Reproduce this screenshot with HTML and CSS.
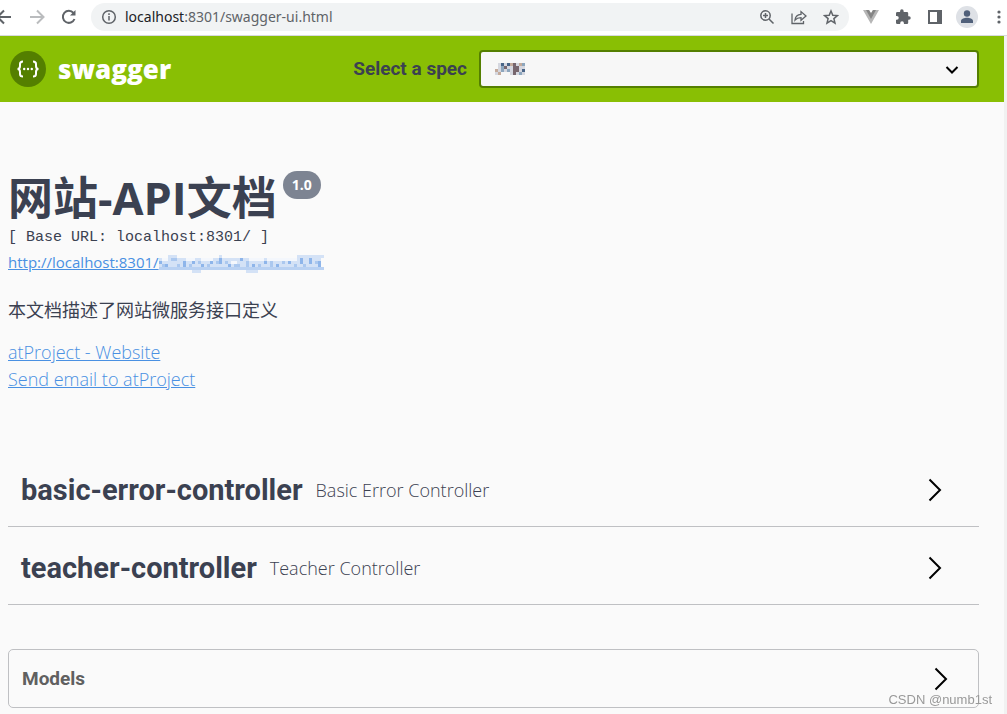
FILE: index.html
```
<!DOCTYPE html>
<html lang="zh-CN">
<head>
<meta charset="utf-8">
<title>Swagger UI</title>
<link rel="stylesheet" href="styles.css">
</head>
<body>
<header class="browser">
  <button class="tool nav-back" aria-label="Back"><svg width="18" height="18" viewBox="0 0 18 18" fill="none" stroke="#5f6368" stroke-width="2"><path d="M16 9H3M9 2.500 2.500 9 9 15.500"/></svg></button>
  <button class="tool nav-forward" aria-label="Forward"><svg width="18" height="18" viewBox="0 0 18 18" fill="none" stroke="#babcbe" stroke-width="2"><path d="M2 9h13M9 2.500 15.500 9 9 15.500"/></svg></button>
  <button class="tool nav-reload" aria-label="Reload"><svg width="18" height="18" viewBox="0 0 18 18" fill="none" stroke="#5f6368" stroke-width="2"><path d="M14.500 11A6 6 0 1 1 13.500 5"/><path d="M15.500 2v5.500H10z" fill="#5f6368" stroke="none"/></svg></button>
  <div class="omnibox">
    <svg width="16" height="16" viewBox="0 0 16 16" fill="none" stroke="#5f6368" stroke-width="1.500"><circle cx="8" cy="8" r="6.300"/><path d="M8 7v4.500M8 4.300v1.600"/></svg>
    <span class="address"><span class="host">localhost</span>:8301/swagger-ui.html</span>
    <button class="tool" aria-label="Zoom"><svg width="16" height="16" viewBox="0 0 16 16" fill="none" stroke="#5f6368" stroke-width="1.500"><circle cx="6.500" cy="6.500" r="4.700"/><path d="m10 10 4.500 4.500M4 6.500h5M6.500 4v5"/></svg></button>
    <button class="tool" aria-label="Share"><svg width="16" height="16" viewBox="0 0 16 16" fill="none" stroke="#5f6368" stroke-width="1.300"><path d="M1 4.500v10h11.500V12M4 11c.3-3.600 2.500-5.500 6-5.700V2.600L15 7l-5 4.300V8.600C7.500 8.600 5.500 9.300 4 11z"/></svg></button>
    <button class="tool" aria-label="Bookmark"><svg width="16" height="16" viewBox="0 0 16 16" fill="none" stroke="#5f6368" stroke-width="1.500"><path d="m8 2 1.800 4.200 4.600.4-3.500 3 1.100 4.500L8 11.700l-4 2.400 1.100-4.500-3.500-3 4.600-.4z"/></svg></button>
  </div>
  <button class="tool" aria-label="Vue devtools"><svg width="16" height="16" viewBox="0 0 16 16"><path d="M0 1h6l2 3 2-3h6L8 15z" fill="#b6b6b6"/><path d="M3 1h3l2 3.500L10 1h3L8 10z" fill="#858585"/></svg></button>
  <button class="tool" aria-label="Extensions"><svg width="16" height="16" viewBox="0 0 24 24" fill="#5f6368"><path d="M21 11h-1.200V6.500a2 2 0 0 0-2-2H13V3.200a2.700 2.700 0 0 0-5.400 0v1.300H3.500a2 2 0 0 0-2 2v4h1.300a2.800 2.800 0 0 1 0 5.600H1.500v4.400a2 2 0 0 0 2 2h4.300v-1.300a2.800 2.800 0 0 1 5.600 0v1.300h4.400a2 2 0 0 0 2-2v-4.300H21a2.600 2.600 0 0 0 0-5.200z"/></svg></button>
  <button class="tool" aria-label="Side panel"><svg width="16" height="16" viewBox="0 0 16 16"><path d="M1 1h14v14H1z" fill="#5f6368"/><path d="M3 3h7v10H3z" fill="#fff"/></svg></button>
  <button class="tool avatar" aria-label="Profile"><svg width="22" height="22" viewBox="0 0 22 22" fill="#50607a"><circle cx="11" cy="7.500" r="3.200"/><path d="M5 17v-2c0-2.200 3.500-3.200 6-3.200s6 1 6 3.200v2z"/></svg></button>
  <button class="tool menu" aria-label="Menu"><svg width="6" height="16" viewBox="0 0 6 16" fill="#5f6368"><circle cx="3" cy="3" r="1.600"/><circle cx="3" cy="8" r="1.600"/><circle cx="3" cy="13" r="1.600"/></svg></button>
</header>
<div class="page">
  <div class="topbar">
    <a class="brand" href="#">
      <svg width="36" height="36" viewBox="0 0 36 36"><circle cx="18" cy="18" r="18" fill="#547f00"/><g fill="none" stroke="#fff" stroke-width="2"><path d="M13 10.500c-2.500 0-3 .8-3 2.600V15c0 2-.7 3-2.500 3 1.800 0 2.500 1 2.500 3v2c0 1.800.5 2.600 3 2.600M23 10.500c2.500 0 3 .8 3 2.600V15c0 2 .7 3 2.500 3-1.800 0-2.500 1-2.500 3v2c0 1.800-.5 2.600-3 2.600"/></g><g fill="#fff"><circle cx="14.200" cy="18" r="1.200"/><circle cx="18" cy="18" r="1.200"/><circle cx="21.800" cy="18" r="1.200"/></g></svg>
      <span>swagger</span>
    </a>
    <label class="spec-label" for="spec">Select a spec</label>
    <div class="spec">
      <select id="spec"><option></option></select>
      <svg class="spec-value" width="36" height="18" viewBox="0 0 12 6" shape-rendering="crispEdges"><path d="M2 1h9v3H2zM1 3h2v2H1zM6 4h5v1H6z" fill="#d5d7df"/><path d="M3 1h1v1H3zM10 3h1v1h-1zM5 1h1v1H5z" fill="#496587"/><path d="M4 2h1v1H4zM7 1h1v4H7zM8 2h1v2H8z" fill="#77666d"/><path d="M1 3h1v1H1zM6 1h1v1H6zM9 1h1v1H9zM2 4h1v1H2z" fill="#c4ab9c"/><path d="M3 2h1v2H3zM5 3h1v1H5zM10 1h1v1h-1zM9 4h1v1H9z" fill="#8da6bd"/></svg>
      <svg class="spec-arrow" width="14" height="10" viewBox="0 0 14 10" fill="none" stroke="#000" stroke-width="2"><path d="m1.500 2 5.500 5.500L12.500 2"/></svg>
    </div>
  </div>
  <main class="content">
    <section class="info">
      <h1 class="title">网站-API文档<span class="version">1.0</span></h1>
      <div class="base-url">[ Base URL: localhost:8301/ ]</div>
      <a class="docs-link" href="#"><span>http://localhost:8301/</span><svg width="168" height="21" viewBox="0 0 56 7" shape-rendering="crispEdges" aria-hidden="true"><path d="M0 2h54v3H0zM11 6h3v1h-3zM29 6h4v1h-4zM3 1h3v1H3zM46 1h9v1h-9zM20 1h1v1h-1z" fill="#d4e2f6"/><path d="M0 5h55v1H0z" fill="#b9d1f2"/><path d="M0 3h1v1H0zM2 4h1v1H2zM8 3h1v2H8zM11 3h1v1h-1zM14 4h1v1h-1zM17 3h1v1h-1zM20 2h1v2h-1zM23 4h1v1h-1zM27 2h1v1h-1zM31 4h1v1h-1zM35 3h1v1h-1zM39 4h1v1h-1zM43 3h1v1h-1zM47 2h1v2h-1zM50 2h1v2h-1zM53 3h1v2h-1z" fill="#8eb5ea"/><path d="M1 4h1v1H1zM4 2h2v1H4zM6 4h1v1H6zM10 4h1v1h-1zM13 3h1v1h-1zM16 4h1v1h-1zM19 3h1v1h-1zM22 3h1v1h-1zM25 4h2v1h-2zM29 3h1v2h-1zM33 4h1v1h-1zM37 3h1v2h-1zM41 3h1v1h-1zM45 4h1v1h-1zM48 4h1v1h-1zM52 3h1v1h-1z" fill="#abc8ef"/><path d="M1 2h2v1H1zM9 2h3v1H9zM14 2h4v1h-4zM24 3h2v1h-2zM30 2h5v1h-5zM36 2h10v1H36z" fill="#f4f7fc"/></svg></a>
      <p class="description">本文档描述了网站微服务接口定义</p>
      <div class="contact"><a href="#">atProject - Website</a><a href="#">Send email to atProject</a></div>
    </section>
    <section class="tags">
      <button class="tag"><span class="tag-name">basic-error-controller</span><span class="tag-text">Basic Error Controller</span><svg width="14" height="24" viewBox="0 0 14 24" fill="none" stroke="#000" stroke-width="2"><path d="m1.500 1.500 10.500 10.500-10.500 10.500"/></svg></button>
      <button class="tag"><span class="tag-name">teacher-controller</span><span class="tag-text">Teacher Controller</span><svg width="14" height="24" viewBox="0 0 14 24" fill="none" stroke="#000" stroke-width="2"><path d="m1.500 1.500 10.500 10.500-10.500 10.500"/></svg></button>
    </section>
    <button class="models"><span>Models</span><svg width="14" height="24" viewBox="0 0 14 24" fill="none" stroke="#000" stroke-width="2"><path d="m1.500 1.500 10.500 10.500-10.500 10.500"/></svg></button>
  </main>
</div>
<div class="watermark">CSDN @numb1st</div>
</body>
</html>
```
FILE: styles.css
```
* { box-sizing: border-box; }
body {
  margin: 0;
  background: #fafafa;
  color: #3b4151;
  font-family: "Open Sans", "Noto Sans CJK SC", sans-serif;
  font-size: 18px;
}
button { border: 0; padding: 0; background: none; color: inherit; font: inherit; text-align: left; }
svg { display: block; flex: none; }
a { color: #4990e2; }

.browser {
  display: flex;
  align-items: center;
  gap: 16px;
  height: 36px;
  padding-bottom: 2px;
  overflow: hidden;
  background: #fff;
  border-bottom: 1px solid #d8dadd;
}
.tool { flex: none; }
.nav-back { margin-left: -5px; }
.nav-forward { margin-left: -1px; }
.nav-reload { margin-left: -2px; }
.omnibox {
  display: flex;
  flex: 1;
  align-items: center;
  gap: 16px;
  height: 28px;
  margin-left: -3px;
  padding: 0 10px;
  border-radius: 14px;
  background: #f1f3f4;
}
.address {
  flex: 1;
  margin-left: -8px;
  color: #5f6368;
  font: 14px/20px "Noto Sans", sans-serif;
}
.host { color: #202124; }
.omnibox + .tool { margin-left: -2px; }
.avatar { margin-left: -3px; border-radius: 50%; background: #dee1e6; }
.menu { margin: 0 5px 0 2px; }

.page { border-right: 3px solid #f1f1f1; }
.topbar {
  display: flex;
  align-items: center;
  height: 66px;
  padding: 0 25px 0 10px;
  background: #89bf04;
}
.brand {
  display: flex;
  flex: 1;
  align-items: center;
  gap: 12px;
  color: #fff;
  font: 800 26px/36px "Open Sans", sans-serif;
  text-decoration: none;
}
.spec-label { margin-right: 12px; font: bold 19px/24px Roboto, sans-serif; }
.spec { position: relative; flex: 0 1 500px; }
.spec select {
  display: block;
  width: 100%;
  height: 38px;
  border: 2px solid #547f00;
  border-radius: 4px;
  background: #f7f7f7;
  appearance: none;
}
.spec-value, .spec-arrow { position: absolute; pointer-events: none; }
.spec-value { top: 10px; left: 13px; }
.spec-arrow { top: 15px; right: 20px; }

.content { padding: 68px 25px 6px 8px; }
.title {
  display: flex;
  align-items: flex-start;
  gap: 6px;
  margin: 0;
  font-size: 45px;
  line-height: 56px;
}
.version {
  margin-top: 1px;
  padding: 0 9px;
  border-radius: 14px;
  background: #7d8492;
  color: #fff;
  font-size: 14px;
  line-height: 28px;
}
.base-url { font: 15px/24px "Liberation Mono", monospace; }
.docs-link { display: flex; align-items: center; font-size: 15px; line-height: 24px; }
.description { margin: 22px 0 15px; line-height: 28px; }
.contact { display: flex; flex-direction: column; align-items: flex-start; font-weight: 300; line-height: 27px; }

.tags { margin-top: 56px; }
.tag {
  display: flex;
  align-items: center;
  width: 100%;
  height: 78px;
  padding: 4px 37px 0 13px;
  border-bottom: 1px solid #bfc0c3;
}
.tag-name { margin-right: 13px; font: bold 29px/36px Roboto, sans-serif; }
.tag-text { flex: 1; font-weight: 300; }
.models {
  display: flex;
  align-items: center;
  justify-content: space-between;
  width: 100%;
  height: 59px;
  margin-top: 44px;
  padding: 0 30px 0 13px;
  border: 1px solid #bfc0c3;
  border-radius: 5px;
  color: #606060;
  font: bold 19px/24px Roboto, sans-serif;
}
.watermark {
  position: fixed;
  right: 15px;
  bottom: 6px;
  color: #999;
  font: 13px/16px "Liberation Sans", sans-serif;
}
```
